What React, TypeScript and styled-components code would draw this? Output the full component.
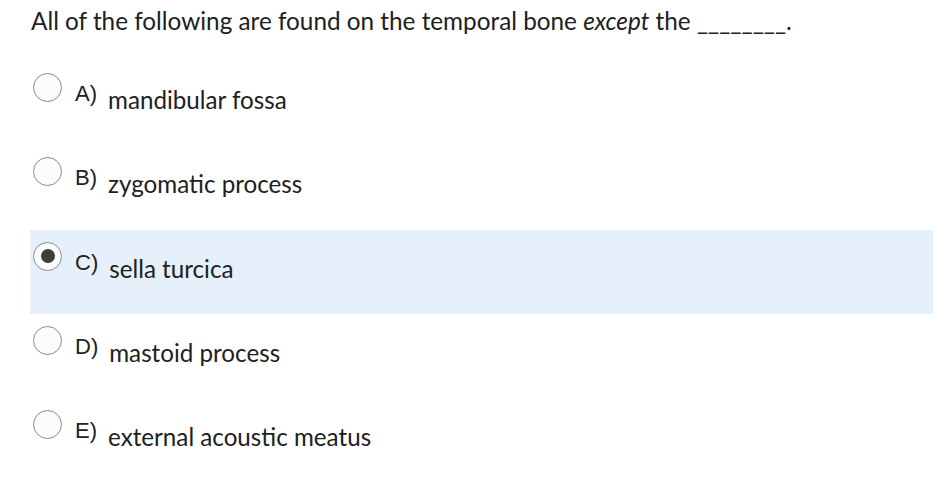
import React from "react";
import styled, { createGlobalStyle } from "styled-components";

const Global = createGlobalStyle`
  html, body { margin: 0; padding: 0; background: #ffffff; }
  body { font-family: Lato, "Liberation Sans", sans-serif; color: #202122; }
`;

const Page = styled.div`
  width: 952px;
  height: 500px;
  box-sizing: border-box;
  padding: 0 19px 0 30px;
  display: flex;
  flex-direction: column;
`;

const Question = styled.div`
  font-family: Lato, sans-serif;
  font-size: 24.3px;
  line-height: 28px;
  padding: 7px 0 0 1px;
  height: 61px;
  box-sizing: border-box;
  em { font-style: italic; }
`;

const Options = styled.div`
  display: flex;
  flex-direction: column;
`;

const Row = styled.label<{ $selected?: boolean }>`
  display: flex;
  align-items: flex-start;
  height: 84.25px;
  box-sizing: border-box;
  padding: 12px 0 0 3px;
  background: ${(p) => (p.$selected ? "#e6f0fb" : "transparent")};
  cursor: pointer;
`;

const Radio = styled.span<{ $checked?: boolean }>`
  width: 29px;
  height: 29px;
  box-sizing: border-box;
  border-radius: 50%;
  border: 1px solid #8a8a8a;
  background: #fbfcff;
  display: flex;
  align-items: center;
  justify-content: center;
  flex: none;
  &::after {
    content: "";
    width: 14px;
    height: 14px;
    border-radius: 50%;
    background: #3e3e3e;
    display: ${(p) => (p.$checked ? "block" : "none")};
  }
`;

const Letter = styled.span`
  font-family: "Liberation Sans", Arial, sans-serif;
  font-size: 22px;
  line-height: 26px;
  margin: 8px 0 0 13px;
  color: #202122;
`;

const Answer = styled.span`
  font-family: Lato, sans-serif;
  font-size: 24.2px;
  line-height: 28px;
  margin: 13px 0 0 11px;
  color: #202122;
`;

const options = [
  { key: "A", text: "mandibular fossa" },
  { key: "B", text: "zygomatic process" },
  { key: "C", text: "sella turcica" },
  { key: "D", text: "mastoid process" },
  { key: "E", text: "external acoustic meatus" },
];

export default function App() {
  const selected = "C";
  return (
    <>
      <Global />
      <Page>
        <Question>
          All of the following are found on the temporal bone <em>except</em> the ________.
        </Question>
        <Options>
          {options.map((o) => (
            <Row key={o.key} $selected={o.key === selected}>
              <Radio $checked={o.key === selected} />
              <Letter>{o.key})</Letter>
              <Answer>{o.text}</Answer>
            </Row>
          ))}
        </Options>
      </Page>
    </>
  );
}
